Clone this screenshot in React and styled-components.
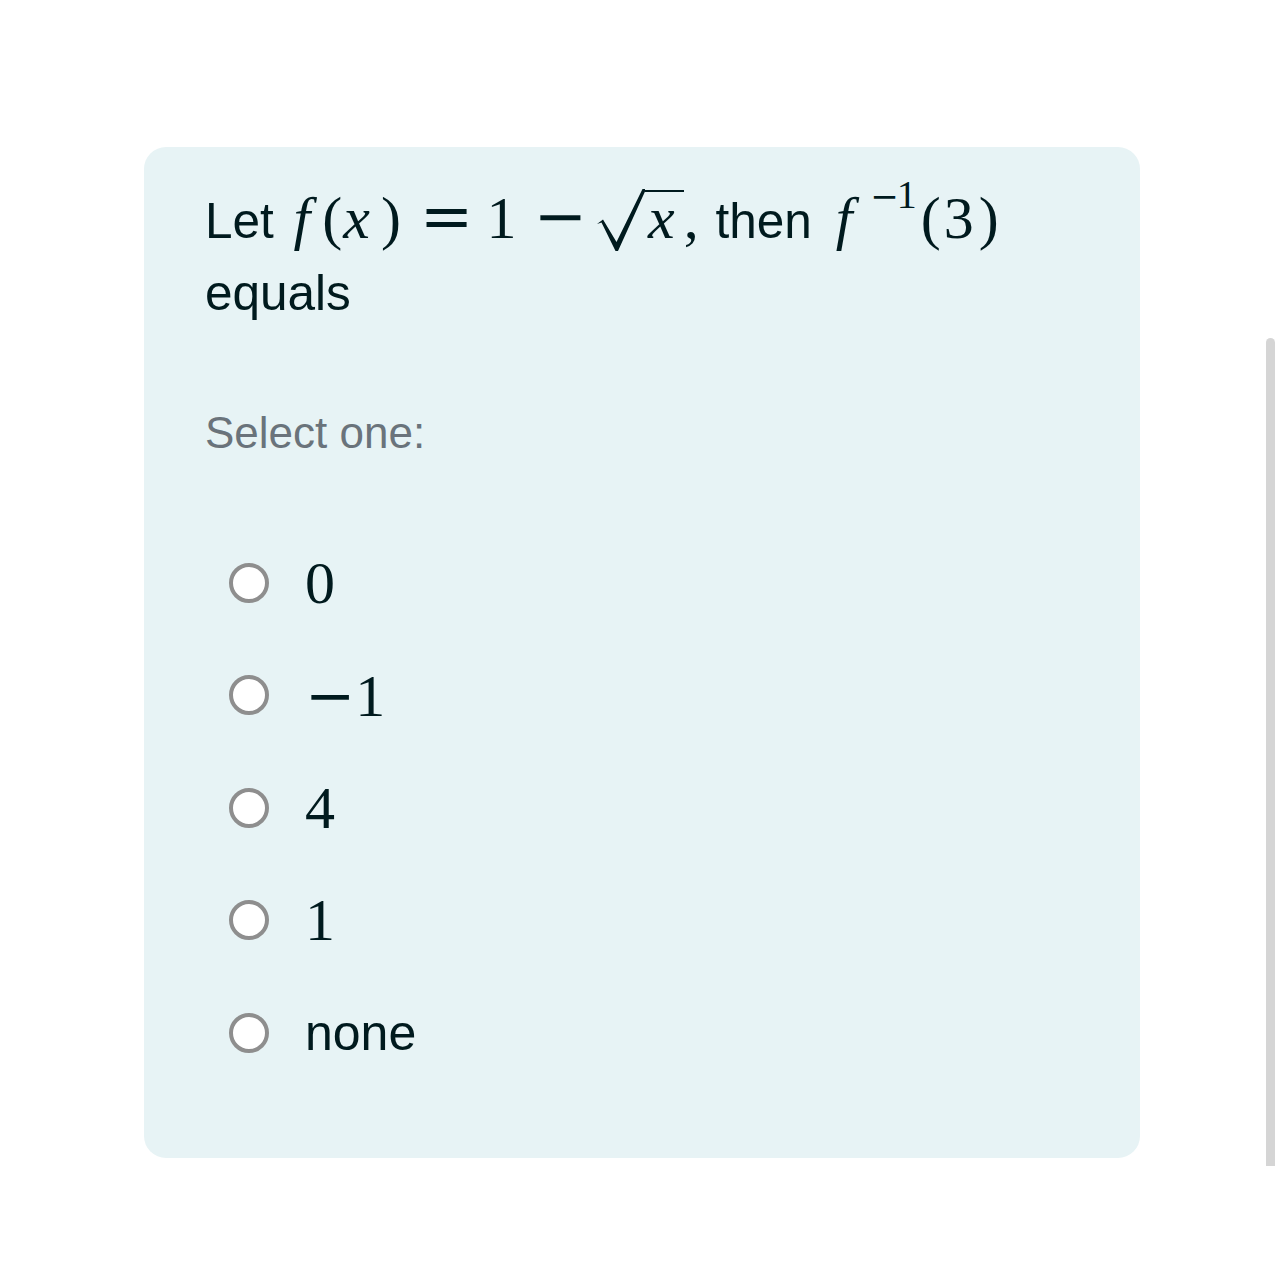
import React from "react";
import styled, { createGlobalStyle } from "styled-components";

const Global = createGlobalStyle`
  html, body { margin: 0; padding: 0; background: #ffffff; }
  body { font-family: "Liberation Sans", Arial, sans-serif; }
`;

const Page = styled.div`
  padding: 147px 144px 127px;
`;

const Card = styled.div`
  background: #e7f3f5;
  border-radius: 22px;
  padding: 37px 61px 89px;
  color: #001a1e;
`;

const QText = styled.p`
  margin: 0;
  font-size: 49.5px;
  line-height: 72px;
`;

const MathRun = styled.span`
  font-family: "Liberation Serif", "Times New Roman", serif;
  font-size: 60px;
  line-height: 1;
  white-space: nowrap;
`;

const Var = styled.i`
  font-style: italic;
  margin-left: ${(p) => p.$l || 0}px;
  margin-right: ${(p) => p.$r || 0}px;
`;

const Ch = styled.span`
  margin-left: ${(p) => p.$l || 0}px;
  margin-right: ${(p) => p.$r || 0}px;
`;

const Sym = styled.span`
  font-family: "DejaVu Serif", serif;
  font-size: ${(p) => p.$size || 60}px;
  margin-left: ${(p) => p.$l || 0}px;
  margin-right: ${(p) => p.$r || 0}px;
`;

const Sqrt = styled.span`
  white-space: nowrap;
`;

const Radical = styled.svg`
  display: inline-block;
  width: 48px;
  height: 62px;
  vertical-align: -13px;
`;

const Radicand = styled.span`
  display: inline-block;
  line-height: 52px;
  border-top: 2.6px solid #001a1e;
  padding: 0 9px 0 3px;
`;

const Sup = styled.span`
  display: inline-block;
  font-size: 40px;
  line-height: 0;
  vertical-align: 30px;
`;

const Prompt = styled.div`
  margin-top: 72px;
  font-size: 44px;
  line-height: 64.8px;
  color: #6a737b;
`;

const Options = styled.div`
  margin-top: 81px;
  display: flex;
  flex-direction: column;
  gap: 40.5px;
`;

const Row = styled.label`
  display: flex;
  align-items: center;
  height: 72px;
  font-size: 50px;
  line-height: 72px;
`;

const Radio = styled.span`
  box-sizing: border-box;
  flex: none;
  width: 40px;
  height: 40px;
  margin-left: 24px;
  margin-right: 36px;
  border-radius: 50%;
  border: 4px solid #8e8e8e;
  background: #ffffff;
`;

const Scroll = styled.div`
  position: fixed;
  top: 338px;
  right: 9px;
  width: 9px;
  height: 828px;
  background: #d5d5d5;
  border-radius: 5px 5px 0 0;
`;

const options = [
  { key: "a", math: [{ t: "0" }] },
  { key: "b", math: [{ t: "−", sym: true }, { t: "1" }] },
  { key: "c", math: [{ t: "4" }] },
  { key: "d", math: [{ t: "1" }] },
  { key: "e", text: "none" },
];

export default function App() {
  return (
    <>
      <Global />
      <Page>
        <Card>
          <QText>
            Let{" "}
            <MathRun>
              <Var $l={6} $r={12}>f</Var>
              <Ch $r={1}>(</Ch>
              <Var $l={0} $r={11}>x</Var>
              <Ch>)</Ch>
              <Sym $size={64} $l={19} $r={13}>=</Sym>
              <Ch>1</Ch>
              <Sym $size={64} $l={17} $r={10}>−</Sym>
              <Sqrt>
                <Radical viewBox="0 0 48 62" aria-hidden="true">
                  <path
                    d="M0,35 L6,30.5 L19.5,53 L45.5,0 L48,0 L48,2.6 L21,62 L18.5,62 L4.5,33.5 Z"
                    fill="#001a1e"
                  />
                </Radical>
                <Radicand>
                  <Var>x</Var>
                </Radicand>
              </Sqrt>
              <Ch $r={3}>,</Ch>
            </MathRun>{" "}
            then{" "}
            <MathRun>
              <Var $l={10} $r={18}>f</Var>
              <Sup>
                <Sym $size={34} $r={-2}>−</Sym>1
              </Sup>
              <Ch $l={4}>(</Ch>
              <Ch $l={3} $r={5}>3</Ch>
              <Ch>)</Ch>
            </MathRun>{" "}
            equals
          </QText>
          <Prompt>Select one:</Prompt>
          <Options>
            {options.map((o) => (
              <Row key={o.key}>
                <Radio />
                {o.text ? (
                  <span>{o.text}</span>
                ) : (
                  <MathRun>
                    {o.math.map((m, i) =>
                      m.sym ? <Sym key={i}>{m.t}</Sym> : <Ch key={i}>{m.t}</Ch>
                    )}
                  </MathRun>
                )}
              </Row>
            ))}
          </Options>
        </Card>
      </Page>
      <Scroll />
    </>
  );
}
